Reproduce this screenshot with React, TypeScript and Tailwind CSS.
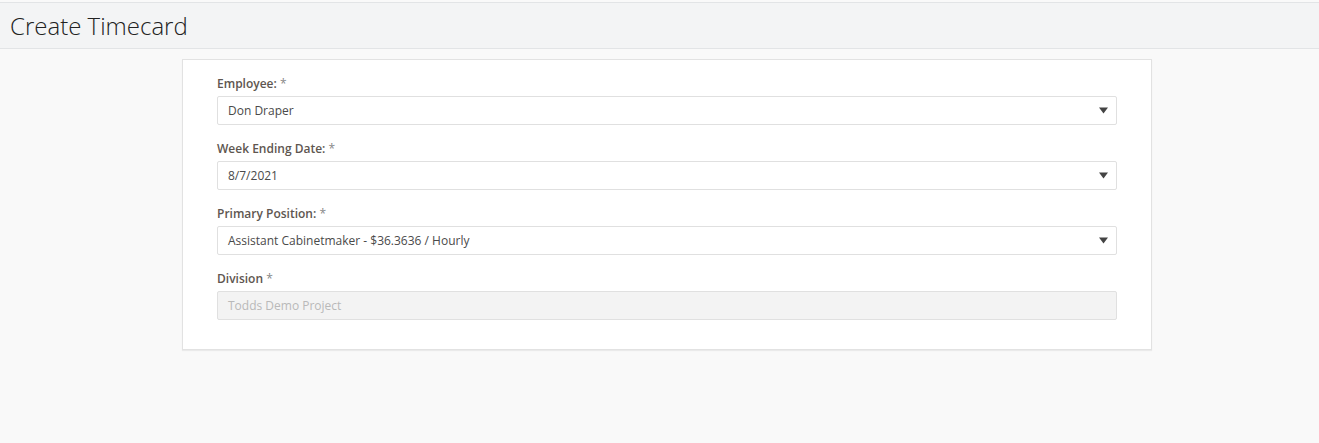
import { ReactNode } from "react";

// Form fields shown on the timecard card
const fields = [
  { label: "Employee:", value: "Don Draper", select: true },
  { label: "Week Ending Date:", value: "8/7/2021", select: true },
  { label: "Primary Position:", value: "Assistant Cabinetmaker - $36.3636 / Hourly", select: true },
  { label: "Division", value: "Todds Demo Project", select: false },
];

function Caret() {
  return (
    <svg width="9" height="7" viewBox="0 0 9 7" className="shrink-0">
      <path d="M0 0.5 H9 L4.5 6.5 Z" fill="#444" />
    </svg>
  );
}

function Field({ label, children }: { label: string; children: ReactNode }) {
  return (
    <div className="mb-[15px]">
      <label className="block mb-[4px] text-[12px] leading-[17px] font-semibold text-[#5e5650]">
        {label} <span className="font-normal text-[#888]">*</span>
      </label>
      {children}
    </div>
  );
}

export default function App() {
  return (
    <div className="min-h-[443px] bg-[#f9f9f9] pt-[2px] font-['Open_Sans',sans-serif]">
      {/* Page header */}
      <header className="h-[47px] bg-[#f3f4f5] border-t border-b border-[#e2e4e6] pl-[10px] flex items-center">
        <h1 className="text-[24px] font-light text-[#222]">Create Timecard</h1>
      </header>

      {/* Card */}
      <div className="flex justify-center pt-[10px] pl-[15px]">
        <div className="w-[970px] bg-white border border-[#e2e2e2] shadow-[0_1px_1px_rgba(0,0,0,0.06)] px-[34px] pt-[15px] pb-[14px]">
          {fields.map((f) => (
            <Field key={f.label} label={f.label}>
              {f.select ? (
                <div className="h-[29px] border border-[#e0e0e0] rounded-[2px] bg-white pl-[10px] pr-[8px] flex items-center justify-between text-[12px] text-[#4a4a4a]">
                  <span>{f.value}</span>
                  <Caret />
                </div>
              ) : (
                <div className="h-[29px] border border-[#e0e0e0] rounded-[2px] bg-[#f3f3f3] pl-[10px] flex items-center text-[12px] text-[#b9b9b9]">
                  {f.value}
                </div>
              )}
            </Field>
          ))}
        </div>
      </div>
    </div>
  );
}
